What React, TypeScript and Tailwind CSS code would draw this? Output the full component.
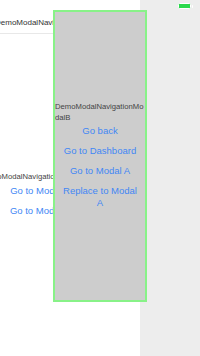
export default function App() {
  const fondo = [{ label: "Go to Modal B" }, { label: "Go to Modal C" }];

  const botonesModal = [
    { label: "Go back" },
    { label: "Go to Dashboard" },
    { label: "Go to Modal A" },
    { label: "Replace to Modal A" },
  ];

  return (
    <div className="relative flex h-[356px] w-[200px] overflow-hidden font-['Liberation_Sans',Arial,sans-serif]">
      {/* pantalla de fondo */}
      <div className="flex w-[140px] flex-col bg-white">
        <header className="flex h-[34px] shrink-0 items-end border-b border-[#e8e8e8] pb-[5px]">
          <span className="-ml-[5px] whitespace-nowrap text-[8px] leading-[10px] text-[#333]">
            DemoModalNavigationModalA
          </span>
        </header>

        <div className="flex w-[81px] flex-1 flex-col items-center justify-center">
          <p className="mr-[15px] mt-[2px] h-[10px] whitespace-nowrap text-[7.7px] leading-[10px] text-[#444]">
            DemoModalNavigationModalA
          </p>
          <div className="-mt-[1px] flex flex-col items-center">
            {fondo.map((b) => (
              <button
                key={b.label}
                className="h-[20px] whitespace-nowrap text-[9.5px] leading-[20px] text-[#4287f5]"
              >
                {b.label}
              </button>
            ))}
          </div>
        </div>
      </div>

      <div className="flex-1 bg-[#ededed]" />

      {/* modal */}
      <div className="absolute left-[53px] top-[10px] flex h-[292px] w-[94px] flex-col justify-center border-2 border-[#88f288] bg-[#cdcdcd] pt-[2px]">
        <p className="-mb-[2px] break-all text-[7.7px] leading-[11px] text-[#444]">
          DemoModalNavigationModalB
        </p>
        <div className="flex flex-col items-center">
          {botonesModal.map((b) => (
            <button
              key={b.label}
              className="px-[5px] py-[4px] text-center text-[9.5px] leading-[12px] text-[#4287f5]"
            >
              {b.label}
            </button>
          ))}
        </div>
      </div>

      {/* bateria */}
      <div className="absolute right-[7px] top-[3px] flex items-center gap-[1px]">
        <div className="h-[6px] w-[13px] rounded-[1.5px] border border-white bg-[#2bd94c]" />
        <div className="h-[3px] w-[1.5px] rounded-r-[1px] bg-white" />
      </div>
    </div>
  );
}
